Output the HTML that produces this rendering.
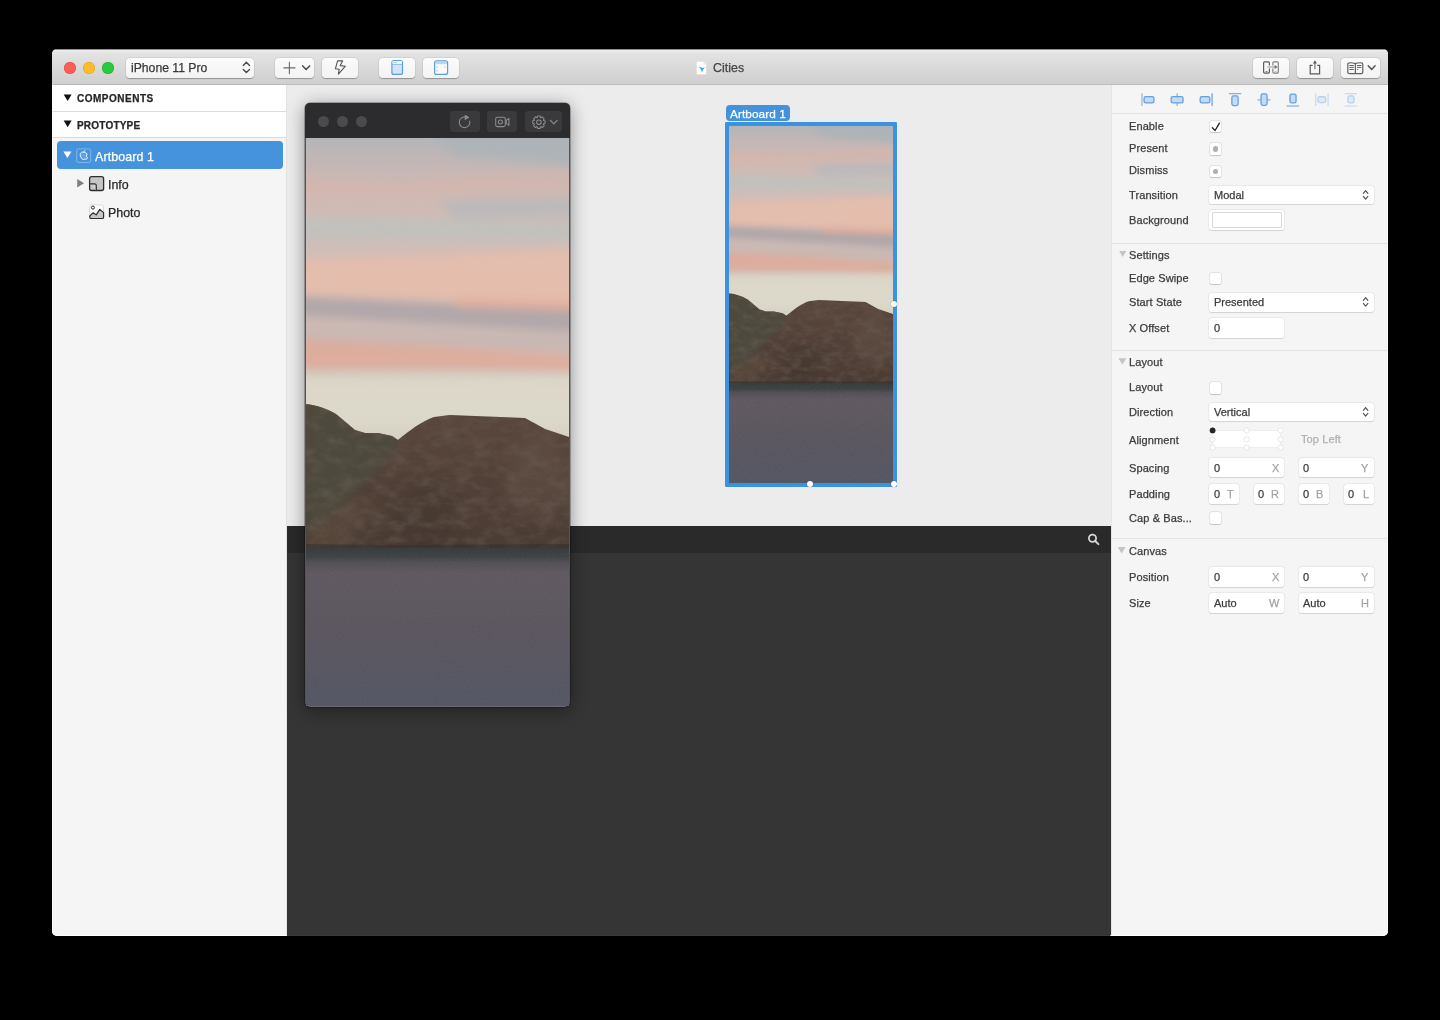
<!DOCTYPE html>
<html><head><meta charset="utf-8">
<style>
*{box-sizing:border-box;margin:0;padding:0}
html,body{width:1440px;height:1020px;background:#000;overflow:hidden;font-family:"Liberation Sans",sans-serif}
.a{position:absolute}
#win{position:absolute;left:52px;top:49px;width:1336px;height:887px;border-radius:5px;overflow:hidden;background:#ececec}
#tb{left:0;top:0;width:1336px;height:36px;background:linear-gradient(#8e8e8e 0,#8e8e8e 1px,#f2f2f2 1px,#e8e8e8 2.5px,#e3e3e3 4px,#cfcfcf 100%);border-bottom:1px solid #bababa}
.light{border-radius:50%;width:12px;height:12px}
.btn{background:linear-gradient(#fbfbfb,#f3f3f3);border-radius:4px;box-shadow:0 0.5px 1px rgba(0,0,0,.28),0 0 0 0.5px rgba(0,0,0,.08);height:20px;top:9px}
#side{left:0;top:36px;width:235px;height:851px;background:#f5f5f5;border-right:1px solid #e2e2e2}
.t{position:absolute;white-space:nowrap;line-height:1;will-change:transform;-webkit-text-stroke:.25px currentColor}
#insp{left:1059px;top:36px;width:277px;height:851px;background:#f5f5f5;border-left:1px solid #e4e4e4}
.lab{position:absolute;left:16.8px;font-size:11px;letter-spacing:.1px;color:#3b3b3b;white-space:nowrap;line-height:1}
.cb{position:absolute;left:97.7px;width:11.6px;height:11.6px;background:#fff;border-radius:1.6px;box-shadow:0 0 0 .5px rgba(0,0,0,.12),0 .5px 1px rgba(0,0,0,.15)}
.fld{position:absolute;background:#fff;border-radius:2.5px;box-shadow:0 0 0 .5px rgba(0,0,0,.08),0 .5px 1px rgba(0,0,0,.1);font-size:11px;color:#3b3b3b;line-height:1}
.fld span{will-change:transform;-webkit-text-stroke:.25px currentColor}
.u{color:#a4a4a4}
.fld span{position:absolute;white-space:nowrap}
.dot{position:absolute;left:3.2px;top:3.2px;width:5.6px;height:5.6px;border-radius:50%;background:#b0b0b0}
.handle{width:6px;height:6px;border-radius:50%;background:#fff;box-shadow:0 0 1px rgba(0,0,0,.5)}
.sep{position:absolute;left:0;width:276px;height:1px;background:#e3e3e3}
</style></head><body>
<svg width="0" height="0" style="position:absolute">
 <defs>
  <linearGradient id="sky" x1="0" y1="0" x2="0" y2="1">
   <stop offset="0" stop-color="#b4b5b9"/>
   <stop offset="0.04" stop-color="#c2b6b5"/>
   <stop offset="0.10" stop-color="#d0b9b3"/>
   <stop offset="0.2" stop-color="#cfbdb8"/>
   <stop offset="0.26" stop-color="#d6bcb2"/>
   <stop offset="0.36" stop-color="#c8b8b4"/>
   <stop offset="0.40" stop-color="#d0beb6"/>
   <stop offset="0.43" stop-color="#d8d0c4"/>
   <stop offset="0.48" stop-color="#dad6c8"/>
   <stop offset="0.54" stop-color="#d4cfc2"/>
  </linearGradient>
  <linearGradient id="water" x1="0" y1="0" x2="0" y2="1">
   <stop offset="0" stop-color="#363a3a"/>
   <stop offset="0.055" stop-color="#3e4143"/>
   <stop offset="0.09" stop-color="#524e54"/>
   <stop offset="0.16" stop-color="#605860"/>
   <stop offset="0.5" stop-color="#5b565e"/>
   <stop offset="1" stop-color="#535663"/>
  </linearGradient>
  <linearGradient id="mtn" x1="0" y1="0" x2="0" y2="1">
   <stop offset="0" stop-color="#5c483d"/>
   <stop offset="1" stop-color="#4a3b33"/>
  </linearGradient>
  <filter id="bl2" x="-50%" y="-50%" width="200%" height="200%"><feGaussianBlur stdDeviation="8"/></filter>
  <filter id="bl3" x="-50%" y="-50%" width="200%" height="200%"><feGaussianBlur stdDeviation="4"/></filter>
  <filter id="rock" x="0" y="0" width="100%" height="100%"><feTurbulence type="fractalNoise" baseFrequency="0.06 0.1" numOctaves="3" seed="7"/><feColorMatrix values="0 0 0 0 0.16  0 0 0 0 0.13  0 0 0 0 0.11  1.2 0 0 0 -0.45"/></filter>
  <filter id="grain" x="0" y="0" width="100%" height="100%"><feTurbulence type="fractalNoise" baseFrequency="0.8" numOctaves="1" seed="2"/><feColorMatrix values="0 0 0 0 0.3  0 0 0 0 0.3  0 0 0 0 0.35  .35 0 0 0 -.12"/></filter>
  <filter id="bl" x="-20%" y="-50%" width="140%" height="200%"><feGaussianBlur stdDeviation="5"/></filter>
  <clipPath id="mclip"><path d="M0 266 C10 267 22 271 30 276 L49 292 L59 295 L72 295 L86 298 L92 302 C104 292 116 283 128 279 L144 277 L219 280 L239 291 L263 299 L263 414 L0 414 Z"/></clipPath>
  <symbol id="photo" viewBox="0 0 263 568" preserveAspectRatio="none">
   <rect width="263" height="568" fill="url(#sky)"/>
   <g filter="url(#bl)">
    <path d="M120 -10 L283 -10 L283 28 L150 18 Z" fill="#acb4b8" opacity=".9"/>
    <path d="M-20 40 L100 46 L140 40 L283 36 L283 48 L-20 56 Z" fill="#d8b4aa" opacity=".6"/>
    <path d="M130 62 L283 58 L283 78 L150 80 Z" fill="#b6b8bc" opacity=".75"/>
    <path d="M-20 78 L283 84 L283 102 L-20 100 Z" fill="#bec2be" opacity=".8"/>
    <path d="M-20 122 L283 110 L283 168 L-20 156 Z" fill="#e6bdad" opacity=".85"/>
    <path d="M-20 157 L283 173 L283 194 L-20 177 Z" fill="#a9a3a8" opacity=".8"/>
    <path d="M150 160 L283 164 L283 173 L150 169 Z" fill="#e6ab9a" opacity=".8"/>
    <path d="M-20 200 L140 208 L283 218 L283 232 L140 230 L-20 230 Z" fill="#e2a896" opacity=".75"/>
    <path d="M-20 240 L283 238 L283 290 L-20 290 Z" fill="#ddd9cb" opacity=".7"/>
   </g>
   <g clip-path="url(#mclip)">
    <rect y="260" width="263" height="154" fill="url(#mtn)"/>
    <g filter="url(#bl3)">
     <path d="M0 266 C10 267 22 271 30 276 L49 292 L59 295 L72 295 L86 298 L96 302 L60 345 L20 385 L0 395 Z" fill="#4e483c"/>
    </g>
    <g filter="url(#bl2)">
     <ellipse cx="30" cy="390" rx="40" ry="16" fill="#62503f" opacity=".55" transform="rotate(-35 30 390)"/>
     <ellipse cx="118" cy="380" rx="32" ry="34" fill="#3f342d" opacity=".45"/>
     <ellipse cx="232" cy="340" rx="34" ry="42" fill="#6a5648" opacity=".4"/>
    </g>
    <rect y="260" width="263" height="154" filter="url(#rock)" opacity=".7"/>
    <path d="M0 406 L90 407 L263 406 L263 411 L0 411 Z" fill="#2f2d2b" opacity=".5"/>
   </g>
   <rect y="410" width="263" height="158" fill="url(#water)"/>
   <rect y="410" width="263" height="158" filter="url(#grain)" opacity=".6"/>
  </symbol>
 </defs>
</svg>
<div id="win">
  <!-- titlebar -->
  <div id="tb" class="a">
    <div class="a light" style="left:12.3px;top:12.9px;background:#fd5f57;box-shadow:inset 0 0 0 .5px #e0443e"></div>
    <div class="a light" style="left:31.1px;top:12.9px;background:#febb2e;box-shadow:inset 0 0 0 .5px #dea123"></div>
    <div class="a light" style="left:49.6px;top:12.9px;background:#29c940;box-shadow:inset 0 0 0 .5px #1aab29"></div>
    <div class="a btn" style="left:74px;width:128px"></div>
    <div class="t" style="left:79px;top:13.2px;font-size:12.2px;color:#383838">iPhone 11 Pro</div>
    <svg class="a" style="left:74px;top:9px" width="128" height="20" viewBox="0 0 128 20"><g fill="none" stroke="#4a4a4a" stroke-width="1.4" stroke-linecap="round" stroke-linejoin="round"><path d="M117.3 7.5 L120.35 4.2 L123.5 7.5"/><path d="M117.3 11.4 L120.35 14.5 L123.5 11.4"/></g></svg>
    <div class="a btn" style="left:223px;width:39px"></div>
    <svg class="a" style="left:223px;top:9px" width="39" height="20" viewBox="0 0 39 20"><g fill="none" stroke-linecap="round" stroke-linejoin="round"><path d="M8.9 9.9 H20 M14.4 4.2 V15.7" stroke="#6a6a6a" stroke-width="1.1"/><path d="M27.7 7.9 L31.1 11.6 L34.6 7.9" stroke="#4e4e4e" stroke-width="1.5"/></g></svg>
    <div class="a btn" style="left:270px;width:36px"></div>
    <svg class="a" style="left:270px;top:9px" width="36" height="20" viewBox="0 0 36 20"><path d="M15.6 2.9 L20.6 2.9 L18.2 7.6 L23.4 8.2 L16.4 16.1 L17.2 11.2 L13.4 10.7 Z" fill="none" stroke="#555" stroke-width="1.1" stroke-linejoin="round"/></svg>
    <div class="a btn" style="left:327px;width:36px"></div>
    <svg class="a" style="left:327px;top:9px" width="36" height="20" viewBox="0 0 36 20"><rect x="12.9" y="2.6" width="10.6" height="13.8" rx="2" fill="#d4e3f5" stroke="#5c9de2" stroke-width="1.2"/><path d="M13.4 6 H23" stroke="#5c9de2" stroke-width="1"/><rect x="13.5" y="3.2" width="9.4" height="2.6" fill="#fff"/><circle cx="15" cy="4.5" r=".6" fill="#5c9de2"/><circle cx="17" cy="4.5" r=".6" fill="#5c9de2"/></svg>
    <div class="a btn" style="left:371px;width:36px"></div>
    <svg class="a" style="left:371px;top:9px" width="36" height="20" viewBox="0 0 36 20"><rect x="11.6" y="2.8" width="13" height="13.6" rx="2" fill="#fafafa" stroke="#5c9de2" stroke-width="1.2"/><rect x="12.2" y="3.6" width="11.8" height="2.6" fill="#bcd5f1"/><rect x="13.6" y="8.3" width="1.3" height="1.3" fill="#a8c8ee"/><rect x="21.1" y="8.3" width="1.3" height="1.3" fill="#a8c8ee"/><rect x="13.6" y="12" width="1.3" height="1.3" fill="#a8c8ee"/></svg>
    <svg class="a" style="left:643.5px;top:11.5px" width="13" height="15" viewBox="0 0 13 15"><path d="M0.3 0.3 H7.8 L10.6 3.1 V13.7 H0.3 Z" fill="#fff" stroke="#c8c8c8" stroke-width=".5"/><path d="M7.8 0.3 V3.1 H10.6" fill="#eee" stroke="#ddd" stroke-width=".4"/><path d="M2.6 5.6 L6.8 7.2 L8.8 6 L6.7 9.2 L5.8 11.8 L5.2 8.4 Z" fill="#1e9bf0"/></svg>
    <div class="t" style="left:660.5px;top:13.1px;font-size:12.4px;letter-spacing:.05px;color:#444">Cities</div>
    <div class="a btn" style="left:1201px;width:36px"></div>
    <svg class="a" style="left:1201px;top:9px" width="36" height="20" viewBox="0 0 36 20"><g fill="none" stroke-width="1.2"><path d="M16.4 7.6 V4.9 Q16.4 3.9 15.4 3.9 H11.6 Q10.6 3.9 10.6 4.9 V14.1 Q10.6 15.1 11.6 15.1 H15.4 Q16.4 15.1 16.4 14.1 V10.4" stroke="#5e5e5e"/><path d="M19.9 7.6 V4.9 Q19.9 3.9 20.9 3.9 H24.3 Q25.3 3.9 25.3 4.9 V14.1 Q25.3 15.1 24.3 15.1 H20.9 Q19.9 15.1 19.9 14.1 V10.4" stroke="#808080"/><path d="M14.4 9 H22.4" stroke="#9a9a9a" stroke-width="1"/></g><path d="M21.6 6.9 L24.6 9 L21.6 11.1 Z" fill="#707070"/><rect x="12.6" y="13.2" width="1.8" height="1" fill="#5e5e5e"/><rect x="21.8" y="13.2" width="1.6" height="1" fill="#aaa"/></svg>
    <div class="a btn" style="left:1245px;width:36px"></div>
    <svg class="a" style="left:1245px;top:9px" width="36" height="20" viewBox="0 0 36 20"><g fill="none" stroke="#5a5a5a" stroke-width="1.2"><path d="M15.6 7.4 H13.2 V15.9 H22.6 V7.4 H20.2"/><path d="M17.9 4 V11.3" stroke="#777"/></g><path d="M15.9 5.4 L17.9 2.2 L19.9 5.4 Z" fill="#5a5a5a"/></svg>
    <div class="a btn" style="left:1289px;width:39px"></div>
    <svg class="a" style="left:1289px;top:9px" width="39" height="20" viewBox="0 0 39 20"><g fill="none" stroke="#606060" stroke-width="1.2" stroke-linecap="round"><path d="M14.4 5.6 Q12 4.6 8.4 4.8 Q6.8 4.8 6.8 6.4 V14.2 Q6.8 15.6 8.4 15.6 H14.4 H20.2 Q21.8 15.6 21.8 14.2 V6.4 Q21.8 4.8 20.2 4.8 Q16.8 4.6 14.4 5.6 V15.6"/><path d="M8.8 7.5 H12.4 M8.8 9.4 H12.4 M8.8 11.5 H12.4 M16.4 7.5 H20 M16.4 9.4 H20" stroke-width="1"/><path d="M27.2 7.8 L30.65 11.5 L34.1 7.8" stroke="#555" stroke-width="1.5" stroke-linejoin="round"/></g><rect x="16.2" y="11" width="1" height="1" fill="#606060"/></svg>
  </div>
  <!-- sidebar -->
  <div id="side" class="a">
    <div class="a" style="left:0;top:0;width:234px;height:52px;background:#fff"></div>
    <div class="a" style="left:0;top:26px;width:234px;height:1px;background:#dcdcdc"></div>
    <div class="a" style="left:0;top:52px;width:234px;height:1px;background:#dcdcdc"></div>
    <div class="t" style="left:25px;top:8.9px;font-size:10px;font-weight:bold;color:#262626;letter-spacing:.5px">COMPONENTS</div>
    <div class="t" style="left:25px;top:35.6px;font-size:10px;font-weight:bold;color:#262626;letter-spacing:.2px">PROTOTYPE</div>
    <div class="a" style="left:4.5px;top:56px;width:226px;height:28px;background:#4693dd;border-radius:4px"></div>
    <svg class="a" style="left:0;top:0" width="60" height="140" viewBox="0 0 60 140">
      <path d="M11.7 9.4 H19.6 L15.65 16.1 Z" fill="#111"/>
      <path d="M11.7 35.5 H19.6 L15.65 42.2 Z" fill="#111"/>
      <path d="M11.4 66.6 H19.5 L15.45 73.1 Z" fill="#fff"/>
      <rect x="24.7" y="63.9" width="14" height="13.6" rx="2" fill="none" stroke="rgba(255,255,255,.32)" stroke-width="1"/>
      <path d="M31.8 67.4 C30.6 66.6 28.2 67 28.2 69.8 C28.2 72.6 30.2 74.6 31.6 74.4 C32.4 74.3 32.8 74 33.4 74.3 C34.6 74.6 35.6 73.2 35.6 72.8 C34.2 72 34.2 70 35.2 69.2 C34.4 67.8 32.8 67 31.8 67.4 Z M31.8 67.4 C31.8 66.2 32.6 65.6 33.4 65.6" fill="rgba(255,255,255,.15)" stroke="#fff" stroke-width=".9"/>
      <path d="M25.2 94 V102.4 L32.1 98.2 Z" fill="#808080"/>
      <rect x="37.6" y="91.7" width="14" height="13.8" rx="2" fill="#c6c6c6" stroke="#2e2e2e" stroke-width="1.3"/>
      <path d="M37.6 98.8 H42.6 Q44.3 98.8 44.3 100.5 V105.5" fill="#cfcfcf" stroke="#2e2e2e" stroke-width="1.2"/>
      <rect x="37.5" y="119.9" width="14" height="13.6" rx="2" fill="#fafafa" stroke="#d6d6d6" stroke-width=".8"/>
      <path d="M37.8 131 L41 127.8 L44.2 129.8 L47.8 124.4 L51.6 127.6 V132.2 Q51.6 133.5 50.3 133.5 H39.1 Q37.8 133.5 37.8 132.2 Z" fill="#c6c6c6" stroke="#2e2e2e" stroke-width="1.2" stroke-linejoin="round"/>
      <circle cx="40.9" cy="122.6" r="1.5" fill="none" stroke="#2e2e2e" stroke-width="1"/>
    </svg>
    <div class="t" style="left:43px;top:66.1px;font-size:12.4px;letter-spacing:.12px;color:#fff">Artboard 1</div>
    <div class="t" style="left:56px;top:94px;font-size:12.4px;color:#262626">Info</div>
    <div class="t" style="left:56px;top:121.8px;font-size:12.4px;color:#262626">Photo</div>
  </div>
  <!-- canvas -->
  <div class="a" style="left:235px;top:36px;width:824px;height:441px;background:#ececec"></div>
  <div class="a" style="left:235px;top:477px;width:824px;height:27px;background:#2a2a2a"></div>
  <div class="a" style="left:235px;top:504px;width:824px;height:383px;background:#353535"></div>
  <svg class="a" style="left:1036px;top:484px" width="14" height="14" viewBox="0 0 14 14"><circle cx="4.5" cy="5.3" r="3.6" fill="none" stroke="#d6d6d6" stroke-width="1.8"/><path d="M7.2 8 L10.4 11.2" stroke="#d6d6d6" stroke-width="1.9" stroke-linecap="round"/></svg>
  <!-- preview window -->
  <div class="a" style="left:253px;top:54px;width:265px;height:604px;border-radius:5px;background:#2c2c2e;box-shadow:0 3px 18px rgba(0,0,0,.42),0 0 0 .5px rgba(0,0,0,.5);overflow:hidden">
    <div class="a light" style="left:12.5px;top:13px;width:11px;height:11px;background:#4b4b4d"></div>
    <div class="a light" style="left:31.5px;top:13px;width:11px;height:11px;background:#4b4b4d"></div>
    <div class="a light" style="left:50.5px;top:13px;width:11px;height:11px;background:#4b4b4d"></div>
    <div class="a" style="left:145.2px;top:8.1px;width:29.5px;height:20.8px;border-radius:3.5px;background:#3a3a3c"></div>
    <div class="a" style="left:182.4px;top:8.1px;width:29.5px;height:20.8px;border-radius:3.5px;background:#3a3a3c"></div>
    <div class="a" style="left:220px;top:8.1px;width:36.5px;height:20.8px;border-radius:3.5px;background:#3a3a3c"></div>
    <svg class="a" style="left:145px;top:8px" width="112" height="22" viewBox="0 0 112 22">
      <g fill="none" stroke="#8c8c8e" stroke-width="1.05" stroke-linejoin="round">
        <path d="M19.6 9.6 A5.3 5.3 0 1 1 15.6 6.1"/>
        <path d="M15.2 4.4 L18.6 6.4 L15.2 8.4 Z" fill="#8c8c8e"/>
        <rect x="45.7" y="6.2" width="9.6" height="9.4" rx="1.6"/>
        <circle cx="50.4" cy="10.9" r="2"/>
        <path d="M56.3 9.3 L58.9 7.3 L58.9 14.4 L56.3 12.4 Z"/>
        <path d="M93.52 9.57 L95.05 9.83 L95.05 12.57 L93.52 12.83 L93.32 13.31 L94.22 14.58 L92.28 16.52 L91.01 15.62 L90.53 15.82 L90.27 17.35 L87.53 17.35 L87.27 15.82 L86.79 15.62 L85.52 16.52 L83.58 14.58 L84.48 13.31 L84.28 12.83 L82.75 12.57 L82.75 9.83 L84.28 9.57 L84.48 9.09 L83.58 7.82 L85.52 5.88 L86.79 6.78 L87.27 6.58 L87.53 5.05 L90.27 5.05 L90.53 6.58 L91.01 6.78 L92.28 5.88 L94.22 7.82 L93.32 9.09 Z"/>
        <circle cx="88.9" cy="11.2" r="2.3"/>
        <path d="M100.4 9.3 L103.8 12.9 L107.2 9.3" stroke-width="1.2" stroke-linecap="round"/>
      </g>
    </svg>
    <svg class="a" style="left:1px;top:35px" width="263" height="568" viewBox="0 0 263 568" preserveAspectRatio="none"><use href="#photo"/></svg>
    <div class="a" style="left:0;top:35px;width:265px;height:569px;border-radius:0 0 5px 5px;box-shadow:inset 1px 0 0 #555557,inset -1px 0 0 #555557,inset 0 -1px 0 #6a6a70"></div>
  </div>
  <!-- artboard -->
  <div class="a" style="left:674px;top:56px;width:64px;height:16px;border-radius:4px;background:#4592dc"></div>
  <div class="t" style="left:677.5px;top:60.2px;font-size:11.8px;letter-spacing:.08px;color:#fff">Artboard 1</div>
  <div class="a" style="left:673px;top:73px;width:172px;height:365px;border:4px solid #3a92e0;border-radius:1px;overflow:hidden">
    <svg class="a" style="left:0;top:0" width="164" height="357" viewBox="0 0 263 568" preserveAspectRatio="none"><use href="#photo"/></svg>
  </div>
  <div class="a handle" style="left:838.5px;top:252px"></div>
  <div class="a handle" style="left:755px;top:432px"></div>
  <div class="a handle" style="left:838.5px;top:432px"></div>
  <!-- inspector -->
  <div id="insp" class="a">
    <svg class="a" style="left:23px;top:3px" width="230" height="24" viewBox="0 0 230 24">
      <g stroke-width="1.3" stroke-linejoin="round">
        <path d="M6.95 5.2 V18" stroke="#86b6ea" stroke-width="1.2"/>
        <rect x="9.05" y="8.65" width="9.9" height="6.3" rx="1.8" fill="#c5dbf3" stroke="#62a0e4"/>
        <path d="M42.1 5.2 V18" stroke="#7fb1e8" stroke-width="1.2"/>
        <rect x="36.15" y="8.65" width="11.9" height="6.3" rx="1.8" fill="#c5dbf3" stroke="#62a0e4"/>
        <rect x="65.15" y="8.65" width="9.7" height="6.3" rx="1.8" fill="#c5dbf3" stroke="#62a0e4"/>
        <path d="M77.1 5.2 V18" stroke="#62a0e4" stroke-width="1.2"/>
        <path d="M93.8 5.6 H106.2" stroke="#7fb1e8" stroke-width="1.2"/>
        <rect x="96.85" y="7.85" width="6.3" height="9.7" rx="1.8" fill="#c5dbf3" stroke="#62a0e4"/>
        <path d="M122.6 11.8 H135.4" stroke="#7fb1e8" stroke-width="1.2"/>
        <rect x="126.05" y="5.85" width="6.0" height="11.5" rx="1.8" fill="#c5dbf3" stroke="#62a0e4"/>
        <rect x="154.95" y="6.05" width="6.1" height="8.9" rx="1.8" fill="#c5dbf3" stroke="#62a0e4"/>
        <path d="M151.6 18 H164.1" stroke="#8dbbec" stroke-width="1.5"/>
        <g opacity=".42">
        <path d="M180.7 5.2 V18 M193.1 5.2 V18" stroke="#86b6ea" stroke-width="1.2"/>
        <rect x="182.95" y="8.75" width="7.7" height="5.9" rx="1.8" fill="#c5dbf3" stroke="#62a0e4"/>
        <path d="M209.6 5.6 H222 M209.6 18 H222" stroke="#86b6ea" stroke-width="1.2"/>
        <rect x="212.95" y="7.85" width="6" height="7.1" rx="1.8" fill="#c5dbf3" stroke="#62a0e4"/>
        </g>
      </g>
    </svg>
    <div class="sep" style="top:27.5px"></div>
    <div class="t lab" style="top:35.8px">Enable</div>
    <div class="cb" style="top:35.6px"><svg width="12" height="12" viewBox="0 0 12 12" style="position:absolute;left:0;top:0"><path d="M2.3 6.8 L5.1 9.5 L9.4 2.2" fill="none" stroke="#1f1f1f" stroke-width="1.3" stroke-linecap="round" stroke-linejoin="round"/></svg></div>
    <div class="t lab" style="top:57.8px">Present</div>
    <div class="cb" style="top:58px"><i class="dot"></i></div>
    <div class="t lab" style="top:80.2px">Dismiss</div>
    <div class="cb" style="top:80.5px"><i class="dot"></i></div>
    <div class="t lab" style="top:104.5px">Transition</div>
    <div class="fld dd" style="left:97px;top:100.6px;width:164.5px;height:18px"><span style="left:4.6px;top:4.3px">Modal</span><svg class="a" style="left:150px;top:0" width="14" height="18" viewBox="0 0 14 18"><path d="M4.3 7.4 L6.6 4.6 L8.9 7.4 M4.3 10.4 L6.6 13.1 L8.9 10.4" fill="none" stroke="#4a4a4a" stroke-width="1.05" stroke-linecap="round" stroke-linejoin="round"/></svg></div>
    <div class="t lab" style="top:129.7px">Background</div>
    <div class="fld" style="left:97px;top:124.75px;width:75.4px;height:20.5px"><i style="position:absolute;left:2.5px;top:2.5px;right:2.5px;bottom:2.5px;border:1px solid #d8d8d8;border-radius:1px"></i></div>
    <div class="sep" style="top:157.6px"></div>
    <svg class="a" style="left:0;top:160px" width="20" height="400" viewBox="0 0 20 400">
      <path d="M7.2 6 H14.3 L10.75 12 Z" fill="#c4c4c4"/>
      <path d="M6.45 113.3 H14.3 L10.4 119.7 Z" fill="#c4c4c4"/>
      <path d="M5.8 302.1 H13.6 L9.7 308.4 Z" fill="#c4c4c4"/>
    </svg>
    <div class="t lab" style="top:164.5px">Settings</div>
    <div class="t lab" style="top:187.8px">Edge Swipe</div>
    <div class="cb" style="top:187.6px"></div>
    <div class="t lab" style="top:212.2px">Start State</div>
    <div class="fld dd" style="left:97px;top:208.4px;width:164.5px;height:18.2px"><span style="left:4.6px;top:3.9px">Presented</span><svg class="a" style="left:150px;top:0" width="14" height="18" viewBox="0 0 14 18"><path d="M4.3 7.4 L6.6 4.6 L8.9 7.4 M4.3 10.4 L6.6 13.1 L8.9 10.4" fill="none" stroke="#4a4a4a" stroke-width="1.05" stroke-linecap="round" stroke-linejoin="round"/></svg></div>
    <div class="t lab" style="top:237.5px">X Offset</div>
    <div class="fld" style="left:97px;top:232.5px;width:75.4px;height:20px"><span style="left:4.5px;top:5.2px">0</span></div>
    <div class="sep" style="top:265.2px"></div>
    <div class="t lab" style="top:271.9px">Layout</div>
    <div class="t lab" style="top:297.1px">Layout</div>
    <div class="cb" style="top:297px"></div>
    <div class="t lab" style="top:321.6px">Direction</div>
    <div class="fld dd" style="left:97px;top:317.5px;width:164.5px;height:18.5px"><span style="left:4.6px;top:4.1px">Vertical</span><svg class="a" style="left:150px;top:0" width="14" height="18" viewBox="0 0 14 18"><path d="M4.3 7.4 L6.6 4.6 L8.9 7.4 M4.3 10.4 L6.6 13.1 L8.9 10.4" fill="none" stroke="#4a4a4a" stroke-width="1.05" stroke-linecap="round" stroke-linejoin="round"/></svg></div>
    <div class="t lab" style="top:349.5px">Alignment</div>
    <svg class="a" style="left:94.2px;top:339px" width="80" height="30" viewBox="0 0 80 30">
      <rect x="6.5" y="6.6" width="68.1" height="16.9" fill="#fff" stroke="#e6e6e6" stroke-width=".6"/>
      <g fill="#fff" stroke="#dcdcdc" stroke-width=".7">
        <circle cx="40.6" cy="6.4" r="2.6"/><circle cx="74.6" cy="6.4" r="2.6"/>
        <circle cx="6.6" cy="15.4" r="2.6"/><circle cx="40.6" cy="15.4" r="2.6"/><circle cx="74.6" cy="15.4" r="2.6"/>
        <circle cx="6.6" cy="23.6" r="2.6"/><circle cx="40.6" cy="23.6" r="2.6"/><circle cx="74.6" cy="23.6" r="2.6"/>
      </g>
      <circle cx="6.6" cy="6.4" r="2.9" fill="#262626"/>
    </svg>
    <div class="t lab" style="top:348.8px;left:188.7px;color:#b0b0b0">Top Left</div>
    <div class="t lab" style="top:378.2px">Spacing</div>
    <div class="fld" style="left:97px;top:373.1px;width:75.4px;height:19.4px"><span style="left:4.5px;top:5.0px">0</span><span class="u" style="right:5.4px;top:5.0px">X</span></div>
    <div class="fld" style="left:186.85px;top:373.1px;width:75.25px;height:19.4px"><span style="left:4.5px;top:5.0px">0</span><span class="u" style="right:5.4px;top:5.0px">Y</span></div>
    <div class="t lab" style="top:404.3px">Padding</div>
    <div class="fld" style="left:97px;top:399.4px;width:30.4px;height:19.35px"><span style="left:4.5px;top:5.0px">0</span><span class="u" style="right:5.4px;top:5.0px">T</span></div>
    <div class="fld" style="left:141.75px;top:399.4px;width:30.65px;height:19.35px"><span style="left:4.5px;top:5.0px">0</span><span class="u" style="right:5.4px;top:5.0px">R</span></div>
    <div class="fld" style="left:186.85px;top:399.4px;width:30.25px;height:19.35px"><span style="left:4.5px;top:5.0px">0</span><span class="u" style="right:5.4px;top:5.0px">B</span></div>
    <div class="fld" style="left:231.85px;top:399.4px;width:30.25px;height:19.35px"><span style="left:4.5px;top:5.0px">0</span><span class="u" style="right:5.4px;top:5.0px">L</span></div>
    <div class="t lab" style="top:428.0px">Cap &amp; Bas...</div>
    <div class="cb" style="top:427px"></div>
    <div class="sep" style="top:453.4px"></div>
    <div class="t lab" style="top:461.2px">Canvas</div>
    <div class="t lab" style="top:487.0px">Position</div>
    <div class="fld" style="left:97px;top:481.8px;width:75.4px;height:19.9px"><span style="left:4.5px;top:5.2px">0</span><span class="u" style="right:5.4px;top:5.2px">X</span></div>
    <div class="fld" style="left:186.85px;top:481.8px;width:75.25px;height:19.9px"><span style="left:4.5px;top:5.2px">0</span><span class="u" style="right:5.4px;top:5.2px">Y</span></div>
    <div class="t lab" style="top:513.2px">Size</div>
    <div class="fld" style="left:97px;top:508px;width:75.4px;height:19.9px"><span style="left:4.5px;top:4.5px">Auto</span><span class="u" style="right:5.4px;top:4.5px">W</span></div>
    <div class="fld" style="left:186.85px;top:508px;width:75.25px;height:19.9px"><span style="left:4.5px;top:4.5px">Auto</span><span class="u" style="right:5.4px;top:4.5px">H</span></div>
  </div>
  <div class="a" style="left:0;top:36px;width:235px;height:851px;border-radius:0 0 0 5px;box-shadow:inset 1px 0 0 rgba(255,255,255,.55),inset 0 -1px 0 rgba(255,255,255,.7)"></div>
  <div class="a" style="left:1058px;top:36px;width:278px;height:851px;border-radius:0 0 5px 0;box-shadow:inset -1px 0 0 rgba(255,255,255,.55),inset 0 -1px 0 rgba(255,255,255,.7)"></div>
  <div class="a" style="left:235px;top:886px;width:823px;height:1px;background:#3b3b3b"></div>
</div>
</body></html>
